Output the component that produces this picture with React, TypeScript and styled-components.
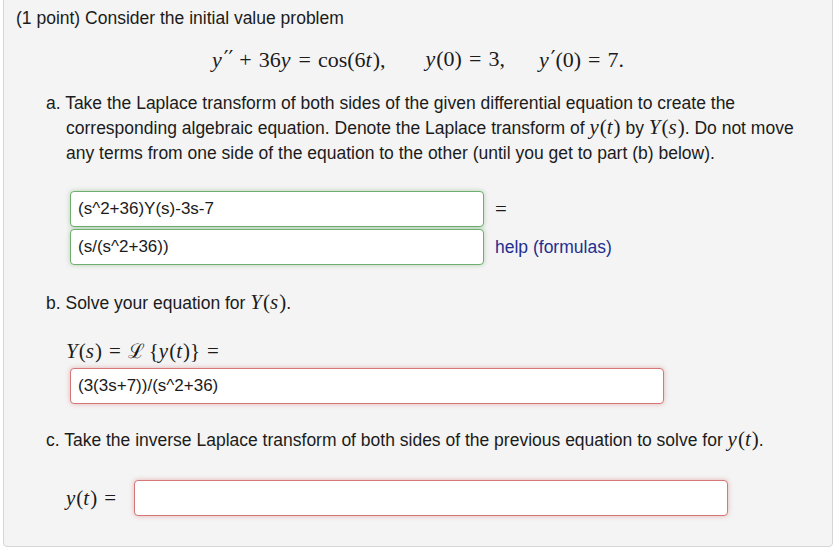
import styled, { createGlobalStyle } from "styled-components";

const Global = createGlobalStyle`
  html, body {
    margin: 0;
    padding: 0;
    background: #ffffff;
  }
  body {
    font-family: "Liberation Sans", Arial, sans-serif;
    color: #1b1b1b;
    overflow: hidden;
  }
`;

export default function App() {
  return (
    <>
      <Global />
      <Panel>
        <Title>(1 point) Consider the initial value problem</Title>

        <Display>
          <M $size={22}>
            <I>y</I>
            <Pr>′′</Pr>
            <Op>+</Op>36<I>y</I>
            <Rel>=</Rel>cos(6<I>t</I>),
          </M>
          <M $size={22} $gap={40}>
            <I>y</I>(0)<Rel>=</Rel>3,
          </M>
          <M $size={22} $gap={34}>
            <I>y</I>
            <Pr>′</Pr>(0)<Rel>=</Rel>7.
          </M>
        </Display>

        <Part $top={18}>
          a. Take the Laplace transform of both sides of the given differential equation to create the
          corresponding algebraic equation. Denote the Laplace transform of{" "}
          <M>
            <I>y</I>(<I>t</I>)
          </M>{" "}
          by{" "}
          <M>
            <I>Y</I>(<I>s</I>)
          </M>
          . Do not move any terms from one side of the equation to the other (until you get to part
          (b) below).
        </Part>

        <EqGrid>
          <Field $state="good" defaultValue="(s^2+36)Y(s)-3s-7" />
          <M>=</M>
          <Field $state="good" defaultValue="(s/(s^2+36))" />
          <Help>help (formulas)</Help>
        </EqGrid>

        <Part $top={26}>
          b. Solve your equation for{" "}
          <M>
            <I>Y</I>(<I>s</I>)
          </M>
          .
        </Part>

        <MathLine>
          <M>
            <I>Y</I>(<I>s</I>)<Rel>=</Rel>
            <Script>ℒ</Script>
            <Thin>{"{"}</Thin>
            <I>y</I>(<I>t</I>){"}"}
            <Rel>=</Rel>
          </M>
        </MathLine>
        <AnswerRow>
          <Field $state="bad" defaultValue="(3(3s+7))/(s^2+36)" $w={594} />
        </AnswerRow>

        <Part $top={24}>
          c. Take the inverse Laplace transform of both sides of the previous equation to solve for{" "}
          <M>
            <I>y</I>(<I>t</I>)
          </M>
          .
        </Part>

        <InlineAnswer>
          <M>
            <I>y</I>(<I>t</I>)<Rel>=</Rel>
          </M>
          <Field $state="bad" defaultValue="" $w={594} />
        </InlineAnswer>
      </Panel>
    </>
  );
}

const Panel = styled.div`
  margin: -6px 1px 0 3px;
  height: 553px;
  box-sizing: border-box;
  background: #f4f4f4;
  border: 1px solid #d6d6d6;
  border-radius: 4px;
  padding: 12px 12px 0 12px;
  font-size: 17.5px;
  line-height: 25px;
`;

const Title = styled.div`
  line-height: 22px;
`;

const Display = styled.div`
  display: flex;
  justify-content: center;
  margin: 17px 0 0 0;
  line-height: 26px;
`;

const M = styled.span<{ $gap?: number; $size?: number }>`
  font-family: "Liberation Serif", "Times New Roman", serif;
  font-size: ${(p) => p.$size ?? 21}px;
  white-space: nowrap;
  margin-left: ${(p) => p.$gap ?? 0}px;
`;

const I = styled.i`
  font-style: italic;
  margin-right: 1px;
`;

const Pr = styled.span`
  font-family: "DejaVu Sans", sans-serif;
  font-size: 21px;
  vertical-align: 1px;
  margin-left: 1px;
  letter-spacing: 0px;
`;

const Op = styled.span`
  margin: 0 7px 0 6px;
`;

const Rel = styled.span`
  margin: 0 7px;
`;

const Thin = styled.span`
  margin-left: 4px;
`;

const Script = styled.span`
  font-family: "DejaVu Serif", serif;
  font-size: 20px;
`;

const Part = styled.p<{ $top?: number }>`
  margin: ${(p) => p.$top ?? 16}px 0 0 0;
  padding-left: 50px;
  padding-right: 4px;
  text-indent: -20px;
  line-height: 25px;
  ${M} {
    line-height: 20px;
  }
`;

const EqGrid = styled.div`
  display: grid;
  grid-template-columns: 414px auto;
  column-gap: 11px;
  row-gap: 2px;
  align-items: center;
  margin: 25px 0 0 54px;
  ${M} {
    line-height: 20px;
  }
`;

const Field = styled.input<{ $state: "good" | "bad"; $w?: number }>`
  box-sizing: border-box;
  width: ${(p) => p.$w ?? 414}px;
  height: 36px;
  padding: 0 7px;
  font-family: "Liberation Sans", Arial, sans-serif;
  font-size: 17px;
  color: #1b1b1b;
  background: #fff;
  border-radius: 4px;
  outline: none;
  border: 1px solid ${(p) => (p.$state === "good" ? "#6fae6f" : "#d47777")};
  box-shadow: 0 0 5px
    ${(p) => (p.$state === "good" ? "rgba(60, 140, 60, 0.35)" : "rgba(200, 60, 60, 0.35)")};
`;

const Help = styled.span`
  color: #1f2f8f;
`;

const MathLine = styled.div`
  margin: 24px 0 0 50px;
  line-height: 22px;
`;

const AnswerRow = styled.div`
  margin: 5px 0 0 54px;
`;

const InlineAnswer = styled.div`
  display: flex;
  align-items: center;
  gap: 11px;
  margin: 27px 0 0 50px;
`;
